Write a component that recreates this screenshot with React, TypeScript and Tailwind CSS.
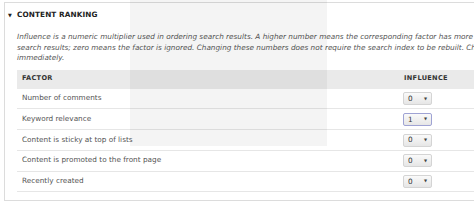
const FACTORS = [
  { label: 'Number of comments', value: '0' },
  { label: 'Keyword relevance', value: '1', focused: true },
  { label: 'Content is sticky at top of lists', value: '0' },
  { label: 'Content is promoted to the front page', value: '0' },
  { label: 'Recently created', value: '0' },
]

function FakeSelect({ value, focused }: { value: string; focused?: boolean }) {
  return (
    <div
      className={`flex items-center justify-between w-[29px] h-[13px] pl-[4px] pr-[4px] rounded-[2px] border bg-gradient-to-b from-[#fafafa] to-[#e6e6e6] ${
        focused ? 'border-[#9fa3d4]' : 'border-[#d4d4d4]'
      }`}
    >
      <span className="text-[7.3px] leading-none text-[#333]">{value}</span>
      <span className="text-[4px] leading-none text-[#444]">▼</span>
    </div>
  )
}

export default function App() {
  return (
    <main
      className="relative w-[474px] h-[205px] overflow-hidden bg-white"
      style={{ fontFamily: '"DejaVu Sans", Verdana, sans-serif' }}
    >
      <div className="ml-[4px] mt-[2px] w-[620px] border-l border-t border-b border-[#dcdcdc] pb-[8px]">
        {/* Legend */}
        <div className="flex items-center h-[10px] mt-[7px] pl-[3px]">
          <span className="text-[5px] leading-none text-[#222] w-[9px]">▼</span>
          <span className="text-[7.3px] leading-none font-bold text-[#222] tracking-[0.1px]">CONTENT RANKING</span>
        </div>

        <div className="pl-[12px]">
          {/* Description */}
          <div className="mt-[12px] text-[7.3px] leading-[10.6px] italic text-[#555] whitespace-nowrap">
            <div>Influence is a numeric multiplier used in ordering search results. A higher number means the corresponding factor has more influence on</div>
            <div>search results; zero means the factor is ignored. Changing these numbers does not require the search index to be rebuilt. Changes take effect</div>
            <div>immediately.</div>
          </div>

          {/* Table */}
          <div className="mt-[6px] w-[560px]">
            <div className="grid grid-cols-[382px_1fr] h-[19px] items-center bg-[#eaeaea] text-[6.6px] font-bold text-[#333] tracking-[0.3px]">
              <span className="pl-[5px]">FACTOR</span>
              <span className="pl-[5px]">INFLUENCE</span>
            </div>
            {FACTORS.map(f => (
              <div key={f.label} className="grid grid-cols-[382px_1fr] h-[20.7px] items-center border-b border-[#e6e6e6]">
                <span className="pl-[5px] text-[7.3px] text-[#555]">{f.label}</span>
                <span className="pl-[4px]">
                  <FakeSelect value={f.value} focused={f.focused} />
                </span>
              </div>
            ))}
          </div>
        </div>
      </div>

      {/* translucent overlay band in the screenshot */}
      <div className="absolute left-[130px] top-0 w-[197px] h-[146px] bg-black/[0.045] pointer-events-none" />
    </main>
  )
}
